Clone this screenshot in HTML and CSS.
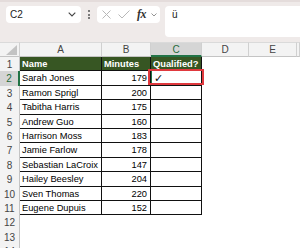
FILE: index.html
```html
<!DOCTYPE html>
<html>
<head>
<meta charset="utf-8">
<link rel="stylesheet" href="styles.css">
</head>
<body>
<div class="toolbar">
  <div class="namebox"><span>C2</span>
    <svg width="8" height="5" viewBox="0 0 8 5"><path d="M0.7 0.7 L4 4 L7.3 0.7" fill="none" stroke="#444" stroke-width="1.1"/></svg>
  </div>
  <div class="dots"><span></span><span></span><span></span></div>
  <div class="fxbox">
    <svg class="ic-x" width="9" height="9" viewBox="0 0 9 9"><path d="M0.5 0.5 L8.5 8.5 M8.5 0.5 L0.5 8.5" stroke="#b8b8b8" stroke-width="1"/></svg>
    <svg class="ic-ok" width="12" height="9" viewBox="0 0 12 9"><path d="M0.5 4.5 L4 8 L11.5 0.5" fill="none" stroke="#b8b8b8" stroke-width="1"/></svg>
    <span class="fx">fx</span>
    <svg class="ic-dd" width="6" height="4" viewBox="0 0 6 4"><path d="M0.5 0.5 L3 3 L5.5 0.5" fill="none" stroke="#888" stroke-width="0.9"/></svg>
  </div>
  <div class="formula">ü</div>
</div>
<div class="sheet">
  <div class="corner"><svg width="19" height="14" viewBox="0 0 19 14"><polygon points="17,2 17,12 6,12" fill="#c3c3c3"/></svg></div>
  <div class="ch">A</div><div class="ch">B</div><div class="ch sel">C</div><div class="ch">D</div><div class="ch">E</div><div class="ch"></div>

  <div class="rh">1</div><div class="c hd">Name</div><div class="c hd">Minutes</div><div class="c hd">Qualified?</div><div class="blank"></div>
  <div class="rh sel">2</div><div class="c">Sarah Jones</div><div class="c num">179</div><div class="c active">✓</div><div class="blank"></div>
  <div class="rh">3</div><div class="c">Ramon Sprigl</div><div class="c num">200</div><div class="c"></div><div class="blank"></div>
  <div class="rh">4</div><div class="c">Tabitha Harris</div><div class="c num">175</div><div class="c"></div><div class="blank"></div>
  <div class="rh">5</div><div class="c">Andrew Guo</div><div class="c num">160</div><div class="c"></div><div class="blank"></div>
  <div class="rh">6</div><div class="c">Harrison Moss</div><div class="c num">183</div><div class="c"></div><div class="blank"></div>
  <div class="rh">7</div><div class="c">Jamie Farlow</div><div class="c num">178</div><div class="c"></div><div class="blank"></div>
  <div class="rh">8</div><div class="c">Sebastian LaCroix</div><div class="c num">147</div><div class="c"></div><div class="blank"></div>
  <div class="rh">9</div><div class="c">Hailey Beesley</div><div class="c num">204</div><div class="c"></div><div class="blank"></div>
  <div class="rh">10</div><div class="c">Sven Thomas</div><div class="c num">220</div><div class="c"></div><div class="blank"></div>
  <div class="rh">11</div><div class="c">Eugene Dupuis</div><div class="c num">152</div><div class="c"></div><div class="blank"></div>
  <div class="rh">12</div><div class="blank wide"></div>
  <div class="rh">13</div><div class="blank wide"></div>
  <div class="rh">14</div><div class="blank wide"></div>
</div>
</body>
</html>
```
FILE: styles.css
```css
* { box-sizing: border-box; margin: 0; padding: 0; }
html, body { width: 300px; height: 248px; overflow: hidden; background: #fff; }
body { font-family: "Liberation Sans", Arial, sans-serif; }

.toolbar {
  height: 42px;
  background: #efeae9;
  border-top: 2px solid #e4dcdb;
  display: flex;
  align-items: flex-start;
  padding: 4px 0 0 6px;
}
.namebox {
  width: 75px; height: 17px;
  background: #fff;
  border-radius: 4px;
  display: flex; align-items: center; justify-content: space-between;
  padding: 0 5px 0 4px;
  font-size: 10px; color: #222;
}
.dots {
  width: 16px; height: 17px;
  display: flex; flex-direction: column; align-items: center; justify-content: center;
  gap: 1.5px;
}
.dots span { width: 2px; height: 2px; background: #555; border-radius: 1px; }
.fxbox {
  width: 63px; height: 17px;
  background: #fff;
  border-radius: 4px;
  display: flex; align-items: center;
  padding-left: 5px;
}
.ic-x { margin-right: 7px; }
.ic-ok { margin-right: 7px; }
.fx {
  font-family: "Liberation Serif", "Times New Roman", serif;
  font-style: italic; font-weight: bold;
  font-size: 12px; color: #333;
  width: 14px;
  letter-spacing: -0.5px;
}
.formula {
  flex: 1;
  height: 31px;
  margin-left: 5px;
  background: #fff;
  border-radius: 4px 0 0 4px;
  padding: 3px 7px;
  font-size: 10px; line-height: 12px; color: #222;
}

.sheet {
  display: grid;
  grid-template-columns: 20px 82px 49px 51px 47px 48px 3px;
  grid-template-rows: 15px 14px 15px 14px 15px 14px 14px 15px 14px 15px 14px 14px 15px 14px 14px;
  font-size: 9.3px;
  color: #000;
}
.corner {
  background: #f3f3f3;
  border-top: 1px solid #dadada;
  border-right: 1px solid #d0d0d0;
  border-bottom: 1px solid #c4c4c4;
}
.corner svg { display: block; }
.ch {
  background: #f3f3f3;
  border-top: 1px solid #dadada;
  border-right: 1px solid #d0d0d0;
  border-bottom: 1px solid #c4c4c4;
  display: flex; align-items: center; justify-content: center;
  color: #444; font-size: 10px;
}
.ch.sel { background: #d5d5d5; color: #1f6b3c; border-bottom: 2px solid #217346; }
.rh {
  background: #f3f3f3;
  border-right: 1px solid #c4c4c4;
  display: flex; align-items: center; justify-content: center;
  color: #444; font-size: 10px;
}
.rh.sel { background: #d5d5d5; color: #1f6b3c; border-right: 2px solid #217346; }
.c {
  border-right: 1px solid #111;
  border-bottom: 1px solid #111;
  display: flex; align-items: center;
  padding: 0 2px;
  white-space: nowrap;
  overflow: hidden;
}
.hd { background: #375623; color: #fff; font-weight: bold; }
.num { justify-content: flex-end; padding-right: 3px; }
.blank { grid-column: span 3; }
.blank.wide { grid-column: span 6; }
.active {
  position: relative;
  overflow: visible;
  padding-left: 3px;
  font-family: "DejaVu Sans", sans-serif;
  font-size: 11px;
  font-weight: bold;
  color: #111;
  box-shadow: inset 1px 0 0 #217346;
}
.active::after {
  content: "";
  position: absolute;
  left: -3px; top: -2px; right: -3px; bottom: 0px;
  border: 2px solid #e0393e;
}
```
